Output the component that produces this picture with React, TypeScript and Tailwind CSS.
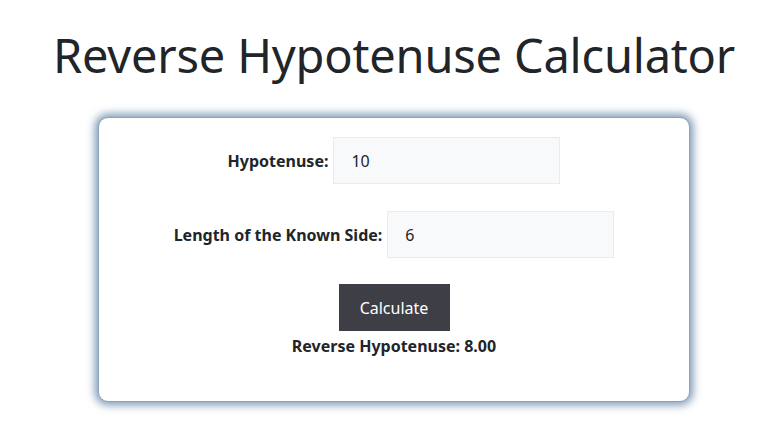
import React from "react";

export default function App() {
  return (
    <div className="min-h-screen bg-white text-[#212529]" style={{ fontFamily: '"Noto Sans", "Open Sans", sans-serif' }}>
      <div className="flex flex-col items-center pt-[24px] pl-[15px]">
        <h1 className="text-[47px] leading-[62px] font-normal text-[#212529] tracking-[-0.2px]">Reverse Hypotenuse Calculator</h1>
        <div className="mt-[31px] w-[592px] h-[285px] bg-white rounded-[10px] border border-[#8aa3bd] shadow-[0_0_9px_3px_rgba(70,108,150,0.7)] flex flex-col items-center pt-[19px]">
          <div className="flex items-center gap-[5px]">
            <label className="text-[16px] font-bold">Hypotenuse:</label>
            <div className="w-[227px] h-[47px] bg-[#f8f9fa] border border-[#e9ecef] flex items-center pl-[17px] text-[16px]">10</div>
          </div>
          <div className="flex items-center gap-[5px] mt-[27px]">
            <label className="text-[16px] font-bold">Length of the Known Side:</label>
            <div className="w-[227px] h-[47px] bg-[#f8f9fa] border border-[#e9ecef] flex items-center pl-[17px] text-[16px]">6</div>
          </div>
          <button className="mt-[26px] w-[111px] h-[47px] bg-[#3e3e47] text-white text-[16px]">Calculate</button>
          <div className="mt-[3px] text-[16px] font-bold">Reverse Hypotenuse: 8.00</div>
        </div>
      </div>
    </div>
  );
}
